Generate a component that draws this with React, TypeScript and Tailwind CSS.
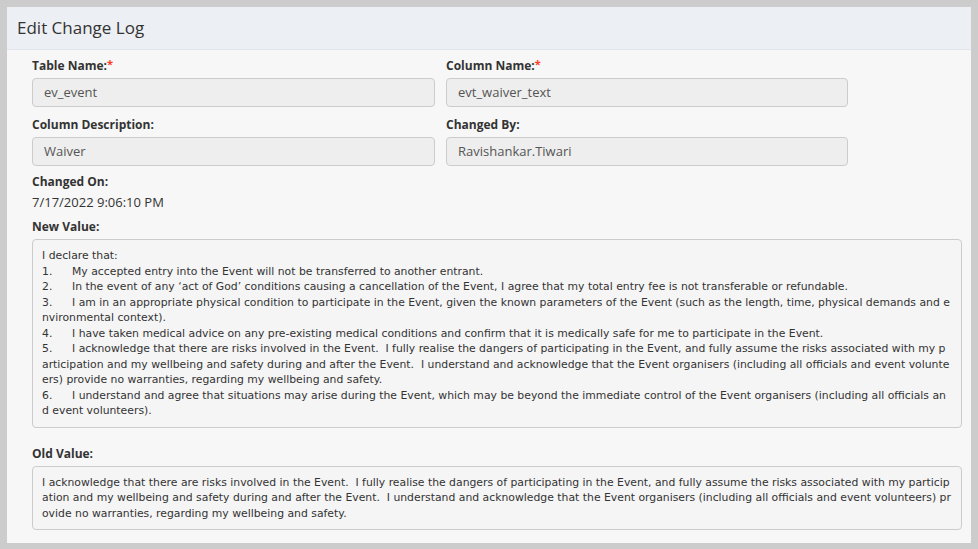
import React from "react";

const sans = { fontFamily: '"Open Sans", "Noto Sans", sans-serif' };
const verdana = { fontFamily: '"DejaVu Sans", Verdana, sans-serif' };

type Line = { n?: string; t: string };

const newValue: Line[] = [
  { t: "I declare that:" },
  { n: "1.", t: "My accepted entry into the Event will not be transferred to another entrant." },
  { n: "2.", t: "In the event of any \u2018act of God\u2019 conditions causing a cancellation of the Event, I agree that my total entry fee is not transferable or refundable." },
  { n: "3.", t: "I am in an appropriate physical condition to participate in the Event, given the known parameters of the Event (such as the length, time, physical demands and e" },
  { t: "nvironmental context)." },
  { n: "4.", t: "I have taken medical advice on any pre-existing medical conditions and confirm that it is medically safe for me to participate in the Event." },
  { n: "5.", t: "I acknowledge that there are risks involved in the Event.  I fully realise the dangers of participating in the Event, and fully assume the risks associated with my p" },
  { t: "articipation and my wellbeing and safety during and after the Event.  I understand and acknowledge that the Event organisers (including all officials and event volunte" },
  { t: "ers) provide no warranties, regarding my wellbeing and safety." },
  { n: "6.", t: "I understand and agree that situations may arise during the Event, which may be beyond the immediate control of the Event organisers (including all officials an" },
  { t: "d event volunteers)." },
];

const oldValue: Line[] = [
  { t: "I acknowledge that there are risks involved in the Event.  I fully realise the dangers of participating in the Event, and fully assume the risks associated with my particip" },
  { t: "ation and my wellbeing and safety during and after the Event.  I understand and acknowledge that the Event organisers (including all officials and event volunteers) pr" },
  { t: "ovide no warranties, regarding my wellbeing and safety." },
];

function Label({ text, required }: { text: string; required?: boolean }) {
  return (
    <div className="h-[18px] leading-[18px] text-[12px] font-bold text-[#333]" style={sans}>
      {text}
      {required && <span className="text-[#ff3b1f] align-top text-[11px] leading-[14px]">*</span>}
    </div>
  );
}

function Field({ label, value, required }: { label: string; value: string; required?: boolean }) {
  return (
    <div>
      <Label text={label} required={required} />
      <div
        className="mt-[3px] h-[29px] rounded-[4px] border border-[#cccccc] bg-[#eeeeee] px-[11px] text-[13px] leading-[27px] text-[#555]"
        style={sans}
      >
        {value}
      </div>
    </div>
  );
}

function TextBox({ lines }: { lines: Line[] }) {
  return (
    <div
      className="mt-[3px] rounded-[4px] border border-[#cccccc] bg-[#f5f5f5] px-[9px] py-[8px] text-[10.83px] leading-[15.5px] text-[#333] overflow-hidden"
      style={verdana}
    >
      {lines.map((l, i) => (
        <div key={i} className="whitespace-pre">
          {l.n && <span className="inline-block w-[30px]">{l.n}</span>}
          {l.t}
        </div>
      ))}
    </div>
  );
}

export default function App() {
  return (
    <div className="w-[978px] h-[549px] bg-[#cccccc] pt-[7px] pl-[7px] pr-[7px] pb-[6px]">
      <div className="h-full bg-[#f7f7f7] flex flex-col">
        <div className="h-[43px] shrink-0 bg-[#eceff4] border-b border-[#e2e6eb] px-[10px] flex items-center">
          <h1 className="text-[17px] text-[#333]" style={sans}>
            Edit Change Log
          </h1>
        </div>
        <div className="pl-[25px] pr-[9px] pt-[7px]">
          <div className="grid grid-cols-[403px_402px] gap-x-[11px] gap-y-[9px]">
            <Field label="Table Name:" value="ev_event" required />
            <Field label="Column Name:" value="evt_waiver_text" required />
            <Field label="Column Description:" value="Waiver" />
            <Field label="Changed By:" value="Ravishankar.Tiwari" />
          </div>
          <div className="mt-[7px]">
            <Label text="Changed On:" />
            <div className="mt-[2px] h-[18px] leading-[18px] text-[13px] text-[#333]" style={sans}>
              7/17/2022 9:06:10 PM
            </div>
          </div>
          <div className="mt-[7px]">
            <Label text="New Value:" />
            <TextBox lines={newValue} />
          </div>
          <div className="mt-[17px]">
            <Label text="Old Value:" />
            <TextBox lines={oldValue} />
          </div>
        </div>
      </div>
    </div>
  );
}
